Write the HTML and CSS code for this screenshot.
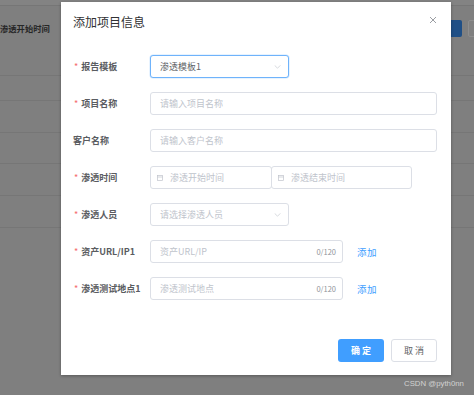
FILE: index.html
```html
<!DOCTYPE html>
<html lang="zh-CN">
<head>
<meta charset="utf-8">
<title>添加项目信息</title>
<link rel="stylesheet" href="styles.css">
</head>
<body>
<div class="screen">
  <div class="bg">
    <div class="bg-top"></div>
    <div class="bg-head">
      <span class="bg-th">渗透开始时间</span>
      <div class="bg-actions">
        <span class="bg-btn bg-primary"></span>
        <span class="bg-btn bg-plain"></span>
      </div>
    </div>
    <div class="bg-row h24"></div>
    <div class="bg-row h31"></div>
    <div class="bg-row h30"></div>
    <div class="bg-row h31"></div>
    <div class="bg-row h31"></div>
  </div>

  <div class="dialog">
    <div class="dialog-header">
      <span class="dialog-title">添加项目信息</span>
      <span class="dialog-close">
        <svg viewBox="0 0 8 8" width="8" height="8"><path d="M1 1 L7 7 M7 1 L1 7" stroke="#909399" stroke-width="0.9" fill="none"/></svg>
      </span>
    </div>
    <div class="dialog-body">
      <div class="form-item">
        <label class="form-label"><span class="req">*</span>报告模板</label>
        <div class="input select w139 focused">
          <span class="val">渗透模板1</span>
          <svg class="chev" viewBox="0 0 8 5" width="7" height="4"><path d="M0.5 0.5 L4 4 L7.5 0.5" stroke="#c0c4cc" stroke-width="0.8" fill="none"/></svg>
        </div>
      </div>
      <div class="form-item">
        <label class="form-label"><span class="req">*</span>项目名称</label>
        <div class="input w287"><span class="ph">请输入项目名称</span></div>
      </div>
      <div class="form-item">
        <label class="form-label">客户名称</label>
        <div class="input w287"><span class="ph">请输入客户名称</span></div>
      </div>
      <div class="form-item">
        <label class="form-label"><span class="req">*</span>渗透时间</label>
        <div class="input date w122">
          <svg class="cal" viewBox="0 0 6 6" width="6" height="6"><rect x="0.5" y="0.5" width="5" height="5" stroke="#c0c4cc" stroke-width="0.7" fill="none"/><path d="M0.5 2 H5.5" stroke="#c0c4cc" stroke-width="0.7"/></svg>
          <span class="ph">渗透开始时间</span>
        </div>
        <div class="input date w141 joined">
          <svg class="cal" viewBox="0 0 6 6" width="6" height="6"><rect x="0.5" y="0.5" width="5" height="5" stroke="#c0c4cc" stroke-width="0.7" fill="none"/><path d="M0.5 2 H5.5" stroke="#c0c4cc" stroke-width="0.7"/></svg>
          <span class="ph">渗透结束时间</span>
        </div>
      </div>
      <div class="form-item">
        <label class="form-label"><span class="req">*</span>渗透人员</label>
        <div class="input select w139">
          <span class="ph">请选择渗透人员</span>
          <svg class="chev" viewBox="0 0 8 5" width="7" height="4"><path d="M0.5 0.5 L4 4 L7.5 0.5" stroke="#c0c4cc" stroke-width="0.8" fill="none"/></svg>
        </div>
      </div>
      <div class="form-item">
        <label class="form-label"><span class="req">*</span>资产URL/IP1</label>
        <div class="input w193"><span class="ph">资产URL/IP</span><span class="count">0/120</span></div>
        <span class="link">添加</span>
      </div>
      <div class="form-item">
        <label class="form-label"><span class="req">*</span>渗透测试地点1</label>
        <div class="input w193"><span class="ph">渗透测试地点</span><span class="count">0/120</span></div>
        <span class="link">添加</span>
      </div>
    </div>
    <div class="dialog-footer">
      <span class="btn btn-primary">确 定</span>
      <span class="btn btn-default">取 消</span>
    </div>
  </div>

  <div class="watermark">CSDN @pyth0nn</div>
</div>
</body>
</html>
```

FILE: styles.css
```css
* { box-sizing: border-box; }
html, body { margin: 0; padding: 0; }
body {
  width: 474px;
  height: 395px;
  overflow: hidden;
  font-family: "Noto Sans CJK SC", "Noto Sans", "Liberation Sans", sans-serif;
}
.screen {
  position: relative;
  width: 474px;
  height: 395px;
  background: #7f7f7f;
  overflow: hidden;
}

/* background page under the mask */
.bg { display: flex; flex-direction: column; }
.bg-top { height: 6px; border-bottom: 1px solid #767676; background: #838383; }
.bg-head {
  height: 70px;
  border-bottom: 1px solid #767676;
  display: flex;
  justify-content: space-between;
  align-items: flex-start;
  padding-top: 14px;
}
.bg-th {
  margin-left: 0;
  font-size: 8.3px;
  line-height: 17px;
  font-weight: 700;
  color: #262626;
  white-space: nowrap;
}
.bg-actions { display: flex; gap: 6px; margin-right: -24px; }
.bg-btn { display: block; height: 17px; border-radius: 2px; }
.bg-primary { width: 40px; background: #1f4f86; }
.bg-plain { width: 30px; border: 1px solid #8e8e8e; background: #808080; }
.bg-row { border-bottom: 1px solid #767676; }
.h24 { height: 25px; }
.h31 { height: 32px; }
.h30 { height: 31px; }

/* dialog */
.dialog {
  position: absolute;
  left: 61px;
  top: 2px;
  width: 390px;
  background: #fff;
  box-shadow: 0 1px 3px rgba(0,0,0,.3);
}
.dialog-header {
  position: relative;
  padding: 13px 12px 0;
  height: 27px;
}
.dialog-title {
  display: block;
  font-size: 12px;
  line-height: 14px;
  color: #303133;
}
.dialog-close {
  position: absolute;
  right: 14px;
  top: 14px;
  width: 8px;
  height: 8px;
  display: flex;
}
.dialog-body { padding: 26px 14px 0 12px; }
.form-item {
  display: flex;
  align-items: center;
  height: 23px;
  margin-bottom: 14px;
}
.form-label {
  width: 77px;
  flex: none;
  font-size: 9px;
  line-height: 23px;
  font-weight: 700;
  color: #5a5c61;
  white-space: nowrap;
}
.req { color: #f56c6c; margin: 0 3px 0 1px; font-weight: 400; }

.input {
  height: 23px;
  border: 1px solid #dcdfe6;
  border-radius: 3px;
  display: flex;
  align-items: center;
  padding: 0 9px;
  font-size: 9px;
  color: #606266;
  background: #fff;
  flex: none;
}
.input.focused { border-color: #6fb3fb; box-shadow: 0 0 0 0.5px rgba(64,158,255,.25); }
.w139 { width: 139px; }
.w287 { width: 287px; }
.w122 { width: 122px; }
.w141 { width: 141px; }
.w193 { width: 193px; }
.joined { margin-left: -1px; }
.ph { color: #c0c4cc; white-space: nowrap; }
.val { color: #606266; white-space: nowrap; }
.select { justify-content: space-between; padding-right: 7px; }
.chev { display: block; }
.date { padding-left: 6px; }
.cal { display: block; margin-right: 7px; flex: none; }
.count {
  margin-left: auto;
  font-size: 7.5px;
  color: #909399;
  margin-right: -3px;
}
.link {
  margin-left: 14px;
  font-size: 9.5px;
  letter-spacing: 0.5px;
  color: #409eff;
  white-space: nowrap;
}

.dialog-footer {
  display: flex;
  justify-content: flex-end;
  gap: 7px;
  padding: 25px 14px 13px;
}
.btn {
  width: 46px;
  height: 23px;
  border-radius: 3px;
  display: flex;
  align-items: center;
  justify-content: center;
  font-size: 9px;
  white-space: pre;
}
.btn-primary { background: #409eff; color: #fff; font-weight: 700; }
.btn-default { background: #fff; color: #606266; border: 1px solid #dcdfe6; }

.watermark {
  position: absolute;
  left: 404px;
  top: 379px;
  font-family: "Liberation Sans", "DejaVu Sans", sans-serif;
  font-size: 7.8px;
  line-height: 10px;
  color: #d2d2d2;
  white-space: nowrap;
}
```
